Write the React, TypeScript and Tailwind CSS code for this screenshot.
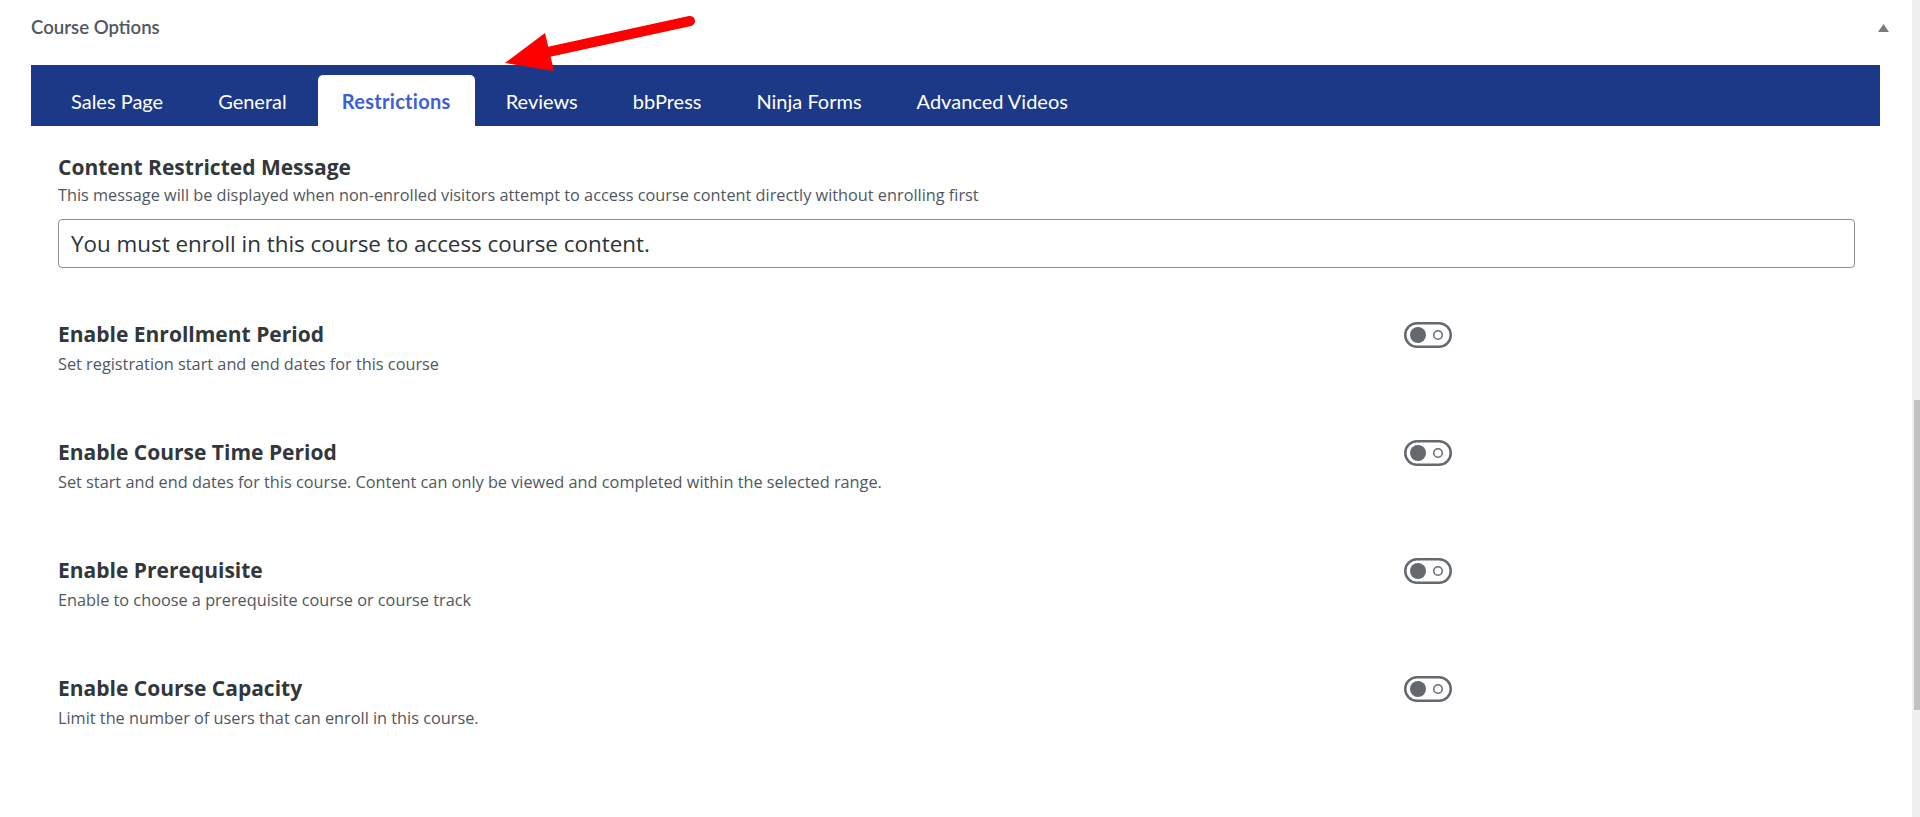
import React from "react";

const tabs = ["Sales Page", "General", "Restrictions", "Reviews", "bbPress", "Ninja Forms", "Advanced Videos"];

const rows = [
  { t: "Enable Enrollment Period", d: "Set registration start and end dates for this course" },
  { t: "Enable Course Time Period", d: "Set start and end dates for this course. Content can only be viewed and completed within the selected range." },
  { t: "Enable Prerequisite", d: "Enable to choose a prerequisite course or course track" },
  { t: "Enable Course Capacity", d: "Limit the number of users that can enroll in this course." },
];

function Toggle() {
  return (
    <svg width="48" height="26" viewBox="0 0 48 26" className="shrink-0">
      <rect x="1.25" y="1.25" width="45.5" height="23.5" rx="11.75" fill="#fff" stroke="#646970" strokeWidth="2.5" />
      <circle cx="14" cy="13" r="8" fill="#646970" />
      <circle cx="34" cy="13" r="4.25" fill="none" stroke="#646970" strokeWidth="1.5" />
    </svg>
  );
}

export default function App() {
  return (
    <div className="relative flex h-[817px] w-full overflow-hidden bg-white font-['Lato',sans-serif]">
      <div className="flex-1 pl-[31px] pr-[32px]">
        <div className="flex h-[65px] items-start justify-between pt-[16px]">
          <span className="text-[18.6px] leading-[22px] font-semibold text-[#50575e] font-['Lato',sans-serif]">Course Options</span>
          <svg width="11" height="8" viewBox="0 0 11 8" className="-mr-[9px] mt-[8px]">
            <polygon points="5.5,0 11,8 0,8" fill="#787c82" />
          </svg>
        </div>
        <div className="flex h-[61px] items-end gap-[7px] bg-[#1c3987] pl-[16px]">
          {tabs.map((t) => {
            const active = t === "Restrictions";
            return (
              <div
                key={t}
                className={
                  active
                    ? "flex h-[51px] items-center rounded-t-[5px] bg-white px-[24px] text-[20px] font-bold tracking-[0.3px] text-[#3d5ed8]"
                    : "flex h-[51px] items-center px-[24px] text-[20px] text-white"
                }
              >
                {t}
              </div>
            );
          })}
        </div>
        <div className="pl-[27px] pr-[25px] pt-[29px]">
          <div className="font-['Open_Sans',sans-serif] text-[21px] leading-[24px] font-bold text-[#32373c]">Content Restricted Message</div>
          <div className="mt-[6px] font-['Open_Sans',sans-serif] text-[16.3px] leading-[20px] text-[#50575e]">
            This message will be displayed when non-enrolled visitors attempt to access course content directly without enrolling first
          </div>
          <div className="mt-[14px] flex h-[49px] w-full items-center rounded-[4px] border border-[#8c8f94] px-[12px] font-['Open_Sans',sans-serif] text-[22.4px] text-[#2c3338]">
            You must enroll in this course to access course content.
          </div>
          <div className="mt-[54px] flex flex-col gap-[66px]">
            {rows.map((r) => (
              <div key={r.t} className="flex items-start">
                <div className="w-[1346px]">
                  <div className="font-['Open_Sans',sans-serif] text-[21px] leading-[24px] font-bold text-[#32373c]">{r.t}</div>
                  <div className="mt-[8px] font-['Open_Sans',sans-serif] text-[16.3px] leading-[20px] text-[#50575e]">{r.d}</div>
                </div>
                <Toggle />
              </div>
            ))}
          </div>
        </div>
      </div>
      <div className="w-[8px] bg-[#f0f0f0]">
        <div className="ml-[2px] mt-[400px] h-[310px] w-[6px] bg-[#c1c1c1]" />
      </div>
      <svg className="pointer-events-none absolute left-0 top-0" width="720" height="90" viewBox="0 0 720 90">
        <line x1="690" y1="21" x2="548" y2="52" stroke="#ff0000" strokeWidth="10" strokeLinecap="round" />
        <polygon points="505,63 545,33 554,71" fill="#ff0000" />
      </svg>
    </div>
  );
}
